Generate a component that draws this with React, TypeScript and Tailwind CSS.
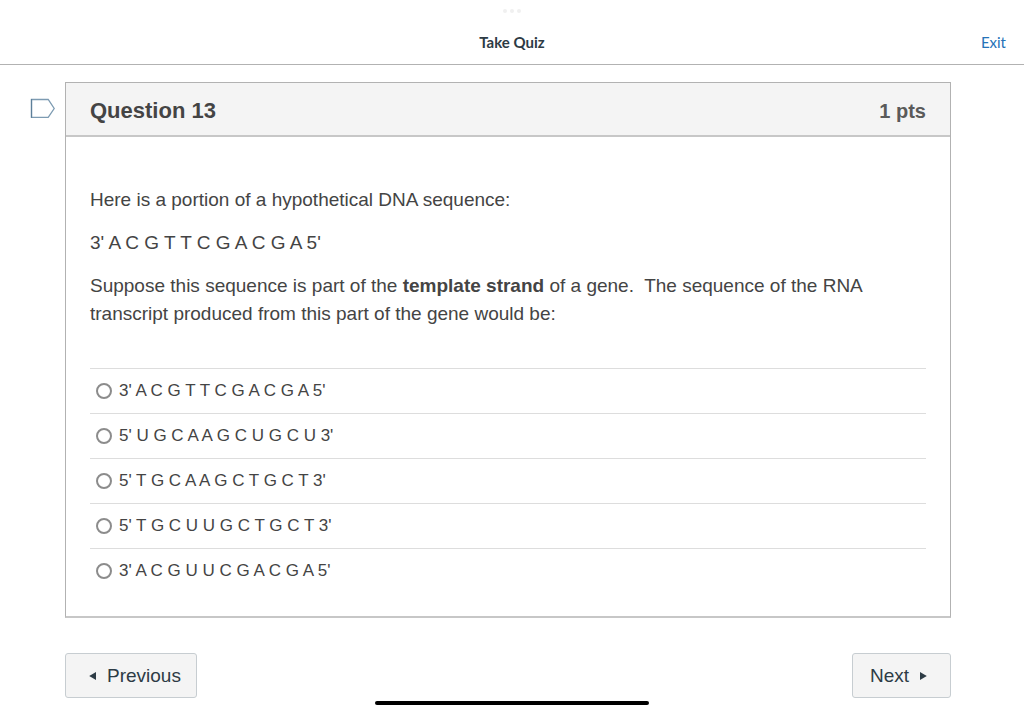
import React, { useState } from 'react';

interface Answer {
    id: string;
    text: string;
}

const answers: Answer[] = [
    { id: 'answer_1', text: "3' A C G T T C G A C G A 5'" },
    { id: 'answer_2', text: "5' U G C A A G C U G C U 3'" },
    { id: 'answer_3', text: "5' T G C A A G C T G C T 3'" },
    { id: 'answer_4', text: "5' T G C U U G C T G C T 3'" },
    { id: 'answer_5', text: "3' A C G U U C G A C G A 5'" },
];

const TopBar: React.FC = () => (
    <header className="relative grid h-[65px] grid-cols-3 items-end border-b border-[#b2b2b2] px-[18px] pb-3 font-['Lato',sans-serif] text-[15px] leading-5">
        <div className="absolute inset-x-0 top-[9px] flex justify-center gap-[3px]">
            <span className="size-1 rounded-full bg-[#f0f0f0]" />
            <span className="size-1 rounded-full bg-[#f0f0f0]" />
            <span className="size-1 rounded-full bg-[#f0f0f0]" />
        </div>
        <h1 className="col-start-2 text-center font-bold text-[#2d3b45]">Take Quiz</h1>
        <a href="#exit" className="justify-self-end text-[#2573b8]">Exit</a>
    </header>
);

const FlagButton: React.FC = () => {
    const [flagged, setFlagged] = useState<boolean>(false);

    return (
        <button
            type="button"
            aria-label="Flag question"
            aria-pressed={flagged}
            onClick={() => setFlagged(!flagged)}
            className="mt-4 ml-[30px] h-5 w-[35px] shrink-0"
        >
            <svg width="26" height="20" viewBox="0 0 26 20" fill={flagged ? '#fdd36a' : 'none'}>
                <path d="M1.5 1.5H18.2L24.2 10.5L18.2 19.3H1.5Z" stroke="#7d9bb2" strokeWidth="1.3" />
                <path d="M1.5 1V19.8" stroke="#5d7f99" strokeWidth="1.2" />
            </svg>
        </button>
    );
};

const App: React.FC = () => {
    const [selected, setSelected] = useState<string>('');

    return (
        <div className="relative min-h-screen bg-white pb-[14px] font-['Liberation_Sans',Arial,sans-serif] text-[#444444]">
            <TopBar />
            <main className="pt-[17px] pr-[73px]">
                <div className="flex items-start">
                    <FlagButton />
                    <section className="flex-1 border border-[#b2b2b2] border-b-2 border-b-[#c7c7c7]">
                        <div className="flex h-[54px] items-center justify-between border-b-2 border-[#c7c7c7] bg-[#f4f4f4] px-6 pt-1">
                            <h2 className="text-[22px] leading-7 font-bold">Question 13</h2>
                            <span className="text-xl leading-7 font-bold text-[#5a5a5a]">1 pts</span>
                        </div>
                        <div className="px-6 pt-[49px] pb-[23px]">
                            <div className="space-y-[15px] text-[19px] leading-7">
                                <p>Here is a portion of a hypothetical DNA sequence:</p>
                                <p>3' A C G T T C G A C G A 5'</p>
                                <p>
                                    Suppose this sequence is part of the <strong>template strand</strong> of a gene.&nbsp; The
                                    sequence of the RNA transcript produced from this part of the gene would be:
                                </p>
                            </div>
                            <div role="radiogroup" aria-label="Answers" className="mt-10">
                                {answers.map((answer) => (
                                    <label
                                        key={answer.id}
                                        htmlFor={answer.id}
                                        className="flex h-[45px] items-center gap-[7px] border-t border-[#dddddd] pl-[6px]"
                                    >
                                        <input
                                            id={answer.id}
                                            type="radio"
                                            name="answer"
                                            checked={selected === answer.id}
                                            onChange={() => setSelected(answer.id)}
                                            className="size-4 appearance-none rounded-full border-2 border-[#8c8c8c] checked:border-[5px] checked:border-[#2573b8]"
                                        />
                                        <span className="text-[17px] leading-6">{answer.text}</span>
                                    </label>
                                ))}
                            </div>
                        </div>
                    </section>
                </div>
                <div className="mt-[35px] flex justify-between pl-[65px] text-[19px] leading-6 text-[#2d3b45]">
                    <button type="button" className="flex h-[45px] items-center gap-[11px] rounded-[3px] border border-[#c7cdd1] bg-[#f4f4f4] pr-[15px] pl-[23px]">
                        <svg width="7" height="8" viewBox="0 0 7 8" fill="currentColor">
                            <path d="M7 0V8L0.2 4Z" />
                        </svg>
                        Previous
                    </button>
                    <button type="button" className="flex h-[45px] items-center gap-[11px] rounded-[3px] border border-[#c7cdd1] bg-[#f4f4f4] pr-[23px] pl-[17px]">
                        Next
                        <svg width="7" height="8" viewBox="0 0 7 8" fill="currentColor">
                            <path d="M0 0V8L6.8 4Z" />
                        </svg>
                    </button>
                </div>
            </main>
            <div className="fixed inset-x-0 bottom-[7px] flex justify-center">
                <div className="h-1 w-[274px] rounded-full bg-black" />
            </div>
        </div>
    );
};

export default App;
